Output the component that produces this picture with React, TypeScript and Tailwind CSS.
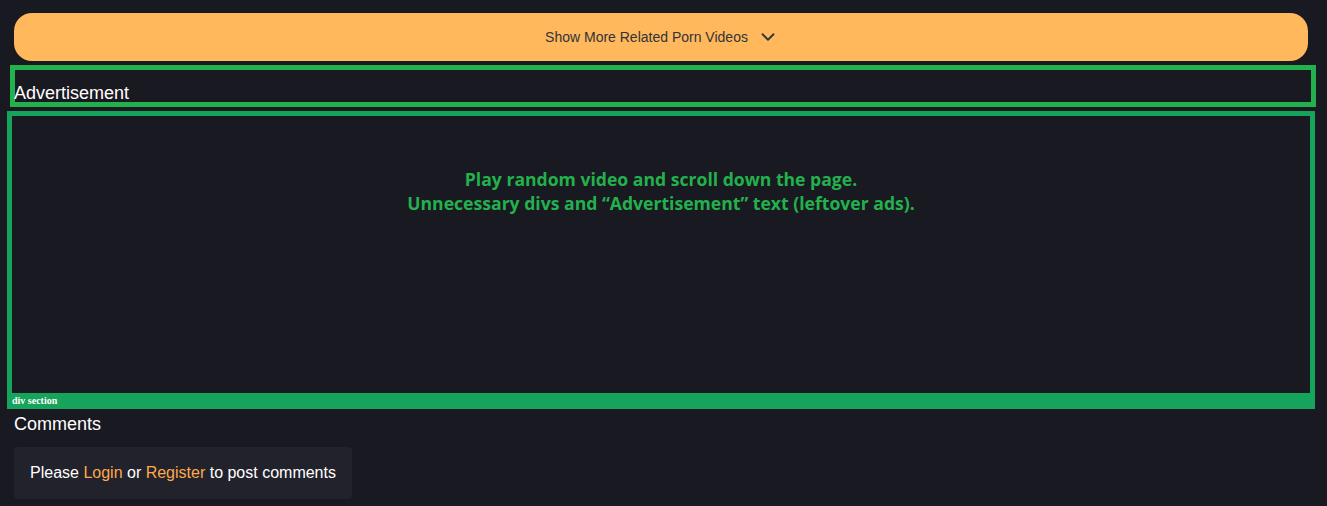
import React from 'react';

const ChevronDown: React.FC = () => (
  <svg width="22" height="22" viewBox="0 0 24 24" fill="none" stroke="currentColor" strokeWidth="2" strokeLinecap="round" strokeLinejoin="round">
    <path d="M6 9l6 6 6-6" />
  </svg>
);

const App: React.FC = () => {
  return (
    <div className="min-h-screen bg-[#191921] font-['Liberation_Sans',Arial,sans-serif] pt-[13px]">
      <div className="px-[14px] pr-[19px]">
        <button className="w-full h-[48px] rounded-[18px] bg-[#ffb85c] text-[#333338] text-[14px] flex items-center justify-center gap-[9px] pl-[2px]">
          <span>Show More Related Porn Videos</span>
          <ChevronDown />
        </button>
      </div>

      {/* leftover ad label */}
      <div className="ml-[10px] mt-[4px] w-[1306px] h-[42px] border-[5px] border-[#22b14c] flex items-end">
        <h3 className="text-white text-[18px] leading-[22px] -ml-[1px] -mb-[2px]">Advertisement</h3>
      </div>

      {/* leftover ad div */}
      <div className="ml-[7px] mt-[4px] w-[1308px] h-[298px] bg-[#16a35b] flex flex-col">
        <div className="mx-[5px] mt-[5px] h-[277px] bg-[#191921] flex flex-col items-center pt-[51px] text-[#22b14c] font-['Open_Sans',sans-serif] font-bold text-[17.6px] leading-[24px]">
          <p>Play random video and scroll down the page.</p>
          <p>Unnecessary divs and “Advertisement” text (leftover ads).</p>
        </div>
        <div className="pl-[5px] text-white font-['Liberation_Serif',serif] font-bold text-[10px] leading-[16px]">div section</div>
      </div>

      <div className="px-[14px]">
        <h3 className="text-white text-[18px] leading-[28px] mt-[1px]">Comments</h3>
        <div className="mt-[9px] inline-block bg-[#22222c] rounded-[4px] px-[16px] py-[14px] text-white text-[16px] leading-[24px]">
          Please <a className="text-[#ffa94a]">Login</a> or <a className="text-[#ffa94a]">Register</a> to post comments
        </div>
      </div>
    </div>
  );
};

export default App;
